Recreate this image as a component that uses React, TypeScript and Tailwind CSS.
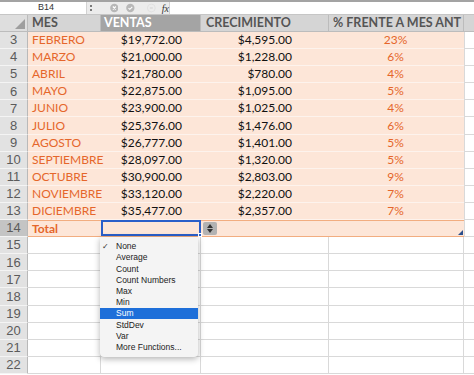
import React from "react";

const rows = [
  { n: 3, m: "FEBRERO", v: "$19,772.00", c: "$4,595.00", p: "23%" },
  { n: 4, m: "MARZO", v: "$21,000.00", c: "$1,228.00", p: "6%" },
  { n: 5, m: "ABRIL", v: "$21,780.00", c: "$780.00", p: "4%" },
  { n: 6, m: "MAYO", v: "$22,875.00", c: "$1,095.00", p: "5%" },
  { n: 7, m: "JUNIO", v: "$23,900.00", c: "$1,025.00", p: "4%" },
  { n: 8, m: "JULIO", v: "$25,376.00", c: "$1,476.00", p: "6%" },
  { n: 9, m: "AGOSTO", v: "$26,777.00", c: "$1,401.00", p: "5%" },
  { n: 10, m: "SEPTIEMBRE", v: "$28,097.00", c: "$1,320.00", p: "5%" },
  { n: 11, m: "OCTUBRE", v: "$30,900.00", c: "$2,803.00", p: "9%" },
  { n: 12, m: "NOVIEMBRE", v: "$33,120.00", c: "$2,220.00", p: "7%" },
  { n: 13, m: "DICIEMBRE", v: "$35,477.00", c: "$2,357.00", p: "7%" },
];

const menu = ["None", "Average", "Count", "Count Numbers", "Max", "Min", "Sum", "StdDev", "Var", "More Functions..."];

function RowNum({ n, active }: { n: number; active?: boolean }) {
  return (
    <div
      className={`w-[28px] shrink-0 h-full flex items-center justify-center text-[13px] text-[#5b5b5b] border-r border-[#b9b9b9] border-b border-b-[#f4f4f4] ${
        active ? "bg-[#c4c4c4]" : "bg-[#e2e2e2]"
      }`}
      style={{ fontFamily: "'Liberation Sans', Arial, sans-serif" }}
    >
      {n}
    </div>
  );
}

export default function App() {
  return (
    <div
      className="relative w-[474px] h-[375px] overflow-hidden bg-white"
      style={{ fontFamily: "Lato, 'Liberation Sans', sans-serif" }}
    >
      {/* formula bar */}
      <div className="h-[15px] flex border-t-2 border-[#a3a3a3] border-b border-b-[#c6c6c6] bg-white">
        <div className="w-[86px] flex items-center pl-[38px] text-[9px] text-[#333]" style={{ fontFamily: "'Liberation Sans', Arial, sans-serif" }}>
          B14
        </div>
        <div className="w-[84px] flex items-center bg-[#ececec] border-l border-r border-[#d2d2d2]">
          <div className="w-[10px] flex flex-col items-center gap-[2px]">
            <span className="w-[2px] h-[2px] bg-[#555] rounded-full" />
            <span className="w-[2px] h-[2px] bg-[#555] rounded-full" />
          </div>
          <svg width="10" height="10" viewBox="0 0 10 10" className="ml-[14px]">
            <circle cx="5" cy="5" r="4.8" fill="#b8b8b8" />
            <path d="M3.3 3.3 L6.7 6.7 M6.7 3.3 L3.3 6.7" stroke="#fff" strokeWidth="1.3" />
          </svg>
          <svg width="10" height="10" viewBox="0 0 10 10" className="ml-[8px]">
            <circle cx="5" cy="5" r="4.8" fill="#b8b8b8" />
            <path d="M2.9 5.1 L4.4 6.5 L7.2 3.6" stroke="#fff" strokeWidth="1.3" fill="none" />
          </svg>
          <svg width="10" height="10" viewBox="0 0 10 10" className="ml-[12px]">
            <circle cx="5" cy="5" r="4.5" fill="none" stroke="#dcdcdc" strokeWidth="0.8" />
            <path d="M3.3 5 L6.7 5" stroke="#cfcfcf" strokeWidth="1" />
          </svg>
          <span className="ml-[6px] text-[10px] italic text-[#333]" style={{ fontFamily: "'Liberation Serif', serif" }}>
            fx
          </span>
        </div>
        <div className="flex-1 bg-white" />
      </div>

      {/* header row */}
      <div className="h-[17px] flex border-b border-[#bcbcbc] text-[12.5px] font-bold text-[#555]">
        <div className="w-[28px] shrink-0 bg-[#dedede] border-r border-[#bcbcbc] relative">
          <svg width="10" height="10" viewBox="0 0 10 10" className="absolute right-[2px] bottom-[2px]">
            <path d="M10 0 L10 10 L0 10 Z" fill="#9e9e9e" />
          </svg>
        </div>
        <div className="w-[73px] shrink-0 bg-[#d5d5d5] border-r border-[#bcbcbc] flex items-center pl-[4px]">MES</div>
        <div className="w-[100px] shrink-0 bg-[#a4a4a4] border-r border-[#bcbcbc] flex items-center pl-[3px] text-white">VENTAS</div>
        <div className="w-[128px] shrink-0 bg-[#d5d5d5] border-r border-[#bcbcbc] flex items-center pl-[5px]">CRECIMIENTO</div>
        <div className="w-[135px] shrink-0 bg-[#d5d5d5] border-r border-[#bcbcbc] flex items-center pl-[4px] whitespace-nowrap">
          % FRENTE A MES ANT
        </div>
        <div className="flex-1 bg-[#d5d5d5]" />
      </div>

      {/* data rows */}
      {rows.map((r) => (
        <div key={r.n} className="h-[17.1px] flex text-[12px]">
          <RowNum n={r.n} />
          <div className="w-[436px] shrink-0 flex bg-[#fde6d8] border-b border-[#fdf3ed]">
            <div className="w-[73px] shrink-0 flex items-center pl-[4px] text-[#e5662b]">{r.m}</div>
            <div className="w-[100px] shrink-0 flex items-center justify-end pr-[19px] text-[#111]">{r.v}</div>
            <div className="w-[128px] shrink-0 flex items-center justify-end pr-[37px] text-[#111]">{r.c}</div>
            <div className="w-[135px] shrink-0 flex items-center justify-center text-[#e5662b] pr-[2px]">{r.p}</div>
          </div>
          <div className="flex-1 border-b border-l border-[#d9d9d9]" />
        </div>
      ))}

      {/* total row */}
      <div className="h-[17.1px] flex text-[12px]">
        <RowNum n={14} active />
        <div className="w-[436px] shrink-0 flex bg-[#fde6d8] border-t border-b border-[#f2ad80] relative">
          <div className="w-[73px] shrink-0 flex items-center pl-[4px] font-bold text-[#e5662b]">Total</div>
          <div className="w-[100px] shrink-0 border-2 border-[#2a5fc9] relative -mt-[1px]">
            <span className="absolute -right-[3px] -bottom-[3px] w-[4px] h-[4px] bg-[#2a5fc9] border border-white" />
          </div>
          <div className="w-[14px] ml-[2px] my-[1px] bg-[#b2b2b2] rounded-[2px] flex flex-col items-center justify-center gap-[1px]">
            <svg width="6" height="4" viewBox="0 0 6 4"><path d="M0 4 L3 0 L6 4 Z" fill="#333" /></svg>
            <svg width="6" height="4" viewBox="0 0 6 4"><path d="M0 0 L3 4 L6 0 Z" fill="#333" /></svg>
          </div>
          <svg width="5" height="5" viewBox="0 0 5 5" className="absolute right-[1px] bottom-[1px]">
            <path d="M5 0 L5 5 L0 5 Z" fill="#2b4f8c" />
          </svg>
        </div>
        <div className="flex-1 border-b border-l border-[#d9d9d9]" />
      </div>

      {/* empty rows */}
      {[15, 16, 17, 18, 19, 20, 21, 22].map((n) => (
        <div key={n} className="h-[17.1px] flex">
          <RowNum n={n} />
          <div className="w-[73px] shrink-0 border-r border-b border-[#d9d9d9]" />
          <div className="w-[100px] shrink-0 border-r border-b border-[#d9d9d9]" />
          <div className="w-[128px] shrink-0 border-r border-b border-[#d9d9d9]" />
          <div className="w-[135px] shrink-0 border-r border-b border-[#d9d9d9]" />
          <div className="flex-1 border-b border-[#d9d9d9]" />
        </div>
      ))}

      {/* dropdown menu */}
      <div
        className="absolute left-[100px] top-[237px] w-[98px] bg-[#f4f4f4] rounded-b-[4px] py-[4px] shadow-[0_2px_6px_rgba(0,0,0,0.3)]"
        style={{ fontFamily: "'Liberation Sans', Arial, sans-serif" }}
      >
        {menu.map((m, i) => (
          <div
            key={m}
            className={`h-[11.2px] flex items-center pl-[16px] text-[8.5px] relative ${
              m === "Sum" ? "bg-[#1e6fd9] text-white" : "text-[#222]"
            }`}
          >
            {i === 0 && <span className="absolute left-[2px] text-[8px] text-[#333]">✓</span>}
            {m}
          </div>
        ))}
      </div>
    </div>
  );
}
